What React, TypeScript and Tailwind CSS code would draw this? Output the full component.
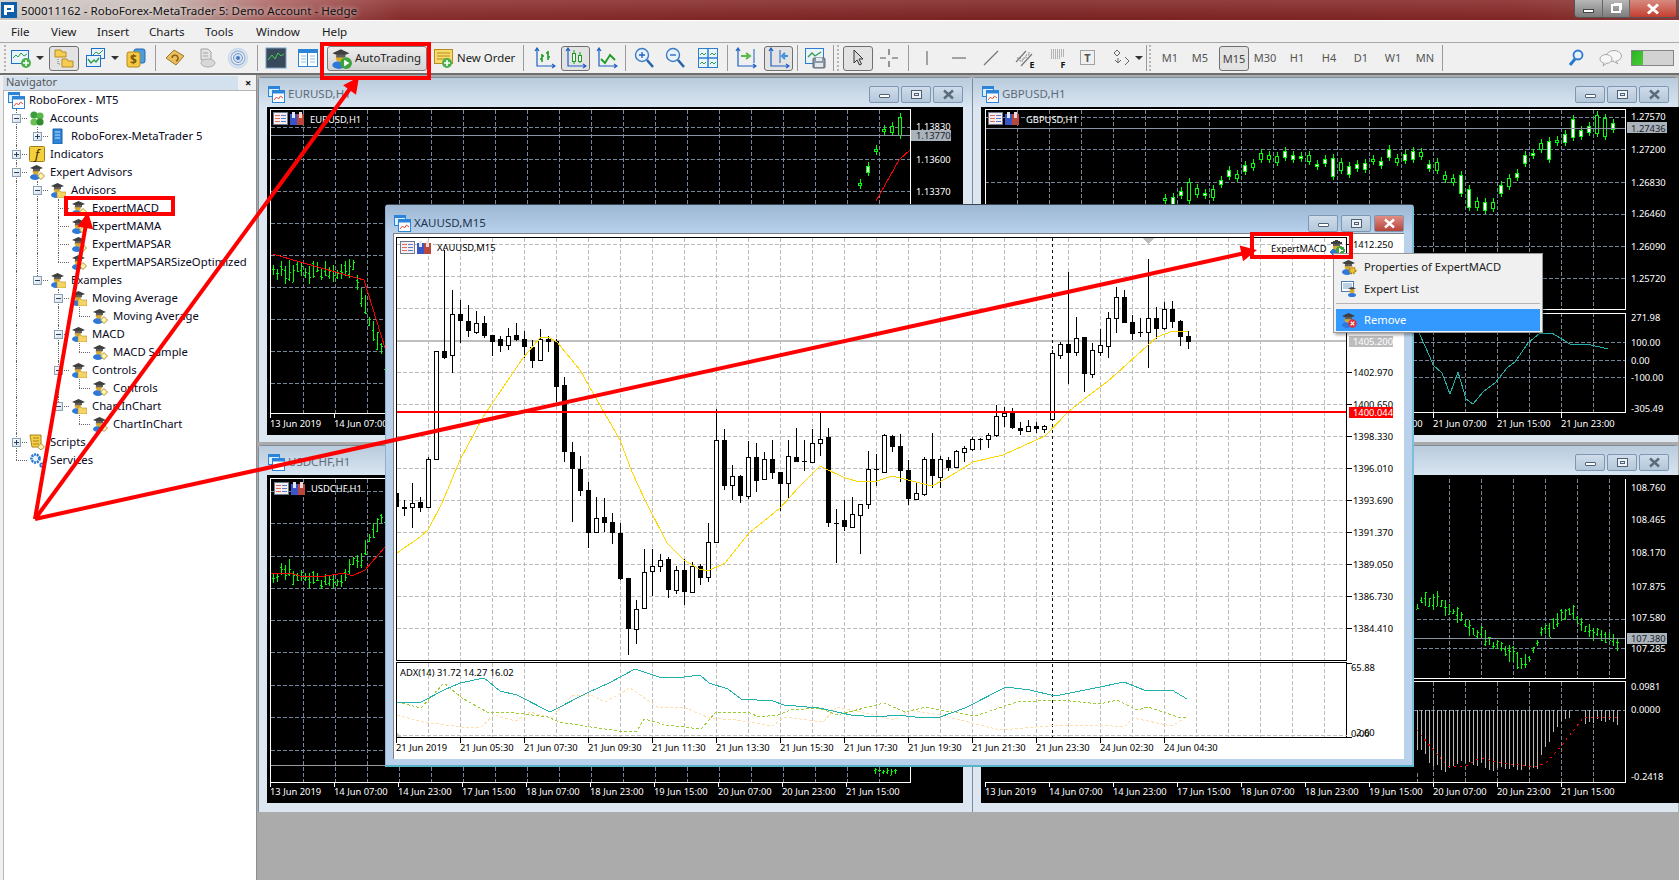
import type { ReactNode } from 'react';

const LABEL = 9.4;

// high, body top, body bottom, low, filled (page pixels, x = 396 + 8 * i)
const candles: [number, number, number, number, number][] = [
  [490, 493, 507, 510, 1], [500, 507, 509, 516, 1], [483, 503, 507, 528, 0], [497, 502, 508, 512, 1], [457, 459, 507, 507, 0],
  [351, 351, 459, 459, 0], [250, 351, 358, 359, 1], [290, 314, 355, 373, 0], [300, 314, 321, 343, 1], [305, 321, 331, 337, 1],
  [311, 323, 332, 334, 0], [316, 323, 336, 338, 1], [335, 335, 342, 356, 1], [336, 339, 346, 352, 1], [328, 336, 345, 350, 0],
  [323, 335, 340, 341, 1], [331, 339, 347, 358, 1], [340, 347, 361, 368, 1], [329, 339, 360, 360, 0], [336, 339, 342, 352, 1],
  [339, 341, 387, 402, 1], [377, 385, 452, 462, 1], [442, 452, 469, 522, 1], [456, 469, 491, 496, 1], [482, 490, 533, 548, 1],
  [497, 518, 532, 532, 0], [498, 517, 523, 532, 1], [513, 522, 533, 544, 1], [523, 533, 579, 580, 1], [578, 578, 629, 655, 1],
  [600, 609, 629, 644, 0], [549, 572, 608, 608, 0], [549, 566, 571, 596, 0], [554, 560, 566, 572, 0], [557, 559, 590, 598, 1],
  [566, 570, 590, 594, 0], [559, 570, 592, 605, 1], [562, 566, 592, 593, 0], [564, 566, 578, 585, 1], [523, 542, 577, 582, 0],
  [409, 440, 542, 542, 0], [429, 440, 486, 490, 1], [465, 476, 485, 500, 0], [475, 476, 496, 503, 1], [441, 457, 496, 499, 0],
  [443, 457, 481, 492, 1], [452, 459, 479, 480, 0], [440, 459, 473, 479, 1], [472, 472, 484, 511, 1], [440, 456, 483, 498, 0],
  [428, 457, 462, 462, 1], [440, 461, 461, 471, 2], [429, 443, 462, 462, 0], [413, 439, 443, 456, 0], [428, 437, 523, 527, 1],
  [509, 523, 523, 563, 2], [500, 520, 527, 531, 1], [497, 514, 527, 527, 0], [504, 504, 515, 554, 0], [451, 469, 504, 509, 0],
  [454, 469, 469, 486, 2], [434, 435, 472, 472, 0], [435, 436, 447, 452, 1], [434, 446, 471, 482, 1], [460, 470, 499, 505, 1],
  [482, 493, 499, 499, 0], [457, 459, 494, 496, 0], [433, 459, 476, 488, 1], [456, 459, 477, 488, 0], [457, 460, 468, 471, 1],
  [450, 451, 467, 467, 0], [446, 448, 452, 462, 0], [437, 439, 449, 451, 0], [438, 439, 439, 450, 2], [433, 435, 439, 448, 0],
  [405, 416, 435, 437, 0], [407, 413, 416, 427, 0], [408, 413, 428, 429, 1], [422, 428, 431, 435, 1], [420, 426, 431, 431, 0],
  [422, 426, 429, 433, 1], [425, 426, 429, 433, 0], [350, 353, 419, 421, 0], [342, 344, 355, 359, 0], [272, 344, 353, 384, 1],
  [317, 338, 352, 356, 0], [337, 337, 374, 392, 1], [343, 350, 374, 378, 0], [329, 345, 352, 356, 0], [312, 318, 346, 358, 0],
  [287, 297, 318, 333, 0], [290, 297, 323, 323, 1], [315, 322, 334, 340, 1], [318, 332, 332, 337, 2], [259, 318, 332, 368, 0],
  [307, 318, 329, 339, 1], [302, 309, 328, 330, 0], [301, 309, 322, 328, 1], [320, 321, 337, 346, 1], [331, 336, 342, 349, 1],
];

const maLine = '397,553 420,537 428,530 442,503 460,460 483,417 523,358 540,338 548,337 557,342 580,370 593,393 620,440 632,472 645,500 667,543 684,560 699,569 708,571 725,563 749,533 769,517 780,508 799,487 820,466 845,478 860,482 877,481 892,476 908,480 932,486 947,478 973,462 1003,455 1045,436 1068,412 1083,400 1107,382 1137,355 1157,337 1173,331 1188,331';
const adxMain = '397,702 421,702 444,690 460,683 484,678 500,691 517,695 550,712 589,692 609,683 635,669 659,677 684,677 700,675 709,683 728,689 741,699 773,701 784,705 819,708 851,715 876,717 898,715 923,718 940,717 965,708 1006,687 1030,690 1055,696 1075,692 1100,687 1124,682 1144,690 1172,690 1187,699';
const adxPlus = '397,702 421,708 444,683 462,698 487,712 516,713 548,717 559,722 591,727 626,732 637,731 644,719 666,725 701,729 716,712 748,712 759,717 778,715 791,710 819,708 837,715 884,703 905,712 926,707 940,710 975,716 1017,702 1060,700 1100,704 1117,700 1137,710 1148,707 1178,717 1187,717';
const adxMinus = '397,715 423,722 462,727 480,728 494,715 516,721 530,712 551,718 573,695 591,695 605,702 630,688 659,708 684,707 709,718 737,720 773,726 784,717 823,722 837,707 862,712 894,720 909,710 940,715 1000,730 1060,725 1100,725 1124,727 1133,718 1172,726 1187,717';

const xauDates = ['21 Jun 2019', '21 Jun 05:30', '21 Jun 07:30', '21 Jun 09:30', '21 Jun 11:30', '21 Jun 13:30', '21 Jun 15:30', '21 Jun 17:30', '21 Jun 19:30', '21 Jun 21:30', '21 Jun 23:30', '24 Jun 02:30', '24 Jun 04:30'];
const xauPrices: [string, number][] = [['1412.250', 244], ['1402.970', 372], ['1400.650', 404], ['1398.330', 436], ['1396.010', 468], ['1393.690', 500], ['1391.370', 532], ['1389.050', 564], ['1386.730', 596], ['1384.410', 628]];
const darkDates = ['13 Jun 2019', '14 Jun 07:00', '14 Jun 23:00', '17 Jun 15:00', '18 Jun 07:00', '18 Jun 23:00', '19 Jun 15:00', '20 Jun 07:00', '20 Jun 23:00', '21 Jun 15:00'];
const gbpDates = ['13 Jun 2019', '14 Jun 07:00', '14 Jun 23:00', '17 Jun 15:00', '18 Jun 07:00', '18 Jun 23:00', '19 Jun 15:00', '21 Jun 07:00', '21 Jun 15:00', '21 Jun 23:00'];

const noise = (i: number) => {
  const v = Math.sin(i * 12.9898) * 43758.5453;
  return (v - Math.floor(v)) * 2 - 1;
};

const along = (path: number[][], x: number) => {
  for (let i = 1; i < path.length; i++) {
    if (x <= path[i][0]) {
      const [x0, y0] = path[i - 1];
      const [x1, y1] = path[i];
      return y0 + ((y1 - y0) * (x - x0)) / (x1 - x0);
    }
  }
  return path[path.length - 1][1];
};

const GreenBars = ({ path, from, to, amp }: { path: number[][]; from: number; to: number; amp: number }) => {
  let d = '';
  for (let x = from; x <= to; x += 4) {
    const c = along(path, x) + noise(x) * amp * 0.5;
    const a = amp * (0.4 + Math.abs(noise(x + 7)) * 0.8);
    d += `M${x} ${Math.round(c - a)}V${Math.round(c + a)}M${x - 1} ${Math.round(c + noise(x + 3) * a)}h1M${x + 1} ${Math.round(c + noise(x + 5) * a)}h1`;
  }
  return <path d={d} stroke="#00ff00" strokeWidth={1} fill="none" />;
};

const GreenCandles = ({ path, from, to }: { path: number[][]; from: number; to: number }) => {
  const out: ReactNode[] = [];
  for (let x = from; x <= to; x += 8) {
    const c = Math.round(along(path, x) + noise(x) * 5);
    const big = noise(x + 9) > 0.75;
    const h = big ? 9 : 1 + Math.round(Math.abs(noise(x + 2)) * 3);
    const up = noise(x + 4) > 0;
    out.push(<rect key={`w${x}`} x={x} y={c - h - 4} width={1} height={2 * h + 8} fill="#00ff00" />);
    out.push(<rect key={`b${x}`} x={x - 1.5} y={c - h + 0.5} width={3} height={2 * h} fill={up ? '#ffffff' : '#000000'} stroke="#00ff00" />);
  }
  return <>{out}</>;
};

const DarkGrid = ({ x0, x1, y0, y1, rows }: { x0: number; x1: number; y0: number; y1: number; rows: number[] }) => {
  let d = '';
  for (let x = x0 + 32; x < x1; x += 32) d += `M${x + 0.5} ${y0}V${y1}`;
  rows.forEach((y) => {
    d += `M${x0} ${y + 0.5}H${x1}`;
  });
  return <path d={d} stroke="#76879b" strokeDasharray="4 2" fill="none" />;
};

const Ticks = ({ x0, y, n, stroke }: { x0: number; y: number; n: number; stroke: string }) => {
  let d = '';
  for (let i = 0; i < n; i++) d += `M${x0 + i * 64 + 0.5} ${y}v5`;
  return <path d={d} stroke={stroke} fill="none" />;
};

// small table + flags in the top left of every chart
const LegendIcons = ({ x, y }: { x: number; y: number }) => (
  <svg x={x} y={y} width={32} height={14} viewBox="0 0 32 14">
    <rect x="0.5" y="0.5" width="14" height="12" fill="#f4eef0" stroke="#6f7a8c" />
    <path d="M2 3h5M2 6h5M2 9h5" stroke="#e06a5e" />
    <path d="M8 3h5M8 6h5M8 9h5" stroke="#5b79c8" />
    <rect x="17" y="2" width="7" height="11" fill="#3a55c8" />
    <rect x="24" y="2" width="7" height="11" fill="#b9473d" />
    <rect x="19" y="0" width="3" height="6" fill="#dfe6f5" />
    <rect x="26" y="0" width="3" height="6" fill="#eddad6" />
  </svg>
);

type CapProps = { deco?: 'diamond' | 'folder' | 'play' | 'gear' | 'x'; size?: number; x?: number; y?: number };

const Cap = ({ deco = 'diamond', size = 16, x, y }: CapProps) => (
  <svg x={x} y={y} width={size} height={size} viewBox="0 0 16 16" className="shrink-0">
    <ellipse cx="6" cy="13" rx="5" ry="3" fill="#2d78d8" />
    <circle cx="6.8" cy="7.5" r="3.1" fill="#d9a92e" />
    <path d="M1 4 7.5 1 14 4 7.5 6.5Z" fill="#3f3f3f" />
    <path d="M4 5h7v2.2H4Z" fill="#5d5d5d" />
    {deco === 'diamond' && <path d="M12 8.5 15.5 12 12 15.5 8.5 12Z" fill="#fff3b0" stroke="#b09030" />}
    {deco === 'folder' && <path d="M7 9h3l1 1h5v6H7Z" fill="#f6d365" stroke="#b08d2e" strokeWidth="0.6" />}
    {deco === 'play' && (
      <>
        <circle cx="11.5" cy="11.5" r="4.5" fill="#3ea33e" />
        <path d="M10 9v5l4-2.5Z" fill="#fff" />
      </>
    )}
    {deco === 'gear' && <circle cx="11.5" cy="11.5" r="3" fill="#f0c330" stroke="#b58a18" strokeWidth="2" strokeDasharray="1.5 1" />}
    {deco === 'x' && (
      <>
        <circle cx="11.5" cy="11.5" r="4.2" fill="#d8323c" />
        <path d="M9.7 9.7l3.6 3.6M13.3 9.7l-3.6 3.6" stroke="#fff" strokeWidth="1.2" />
      </>
    )}
  </svg>
);

const ChartIcon = () => (
  <svg width={17} height={17} viewBox="0 0 17 17" className="shrink-0">
    <rect x="0.5" y="0.5" width="11" height="10" fill="#dcefff" stroke="#2c84d8" />
    <rect x="1" y="1" width="10" height="2" fill="#2c84d8" />
    <rect x="4.5" y="4.5" width="12" height="12" fill="#fff" stroke="#2c84d8" />
    <rect x="5" y="5" width="11" height="2.5" fill="#2c84d8" />
    <path d="M6 14l2.5-3 2 2 2-3 2.5 2" stroke="#e24a3a" fill="none" />
  </svg>
);

const Tool = ({ children }: { children: ReactNode }) => (
  <svg width={22} height={22} viewBox="0 0 22 22" className="shrink-0">
    {children}
  </svg>
);

const Drop = () => (
  <div className="flex h-full w-[11px] items-center justify-center">
    <div className="h-0 w-0 border-x-[4px] border-t-[4px] border-x-transparent border-t-[#333]" />
  </div>
);

const Sep = ({ className }: { className: string }) => <div className={`h-[26px] w-px bg-[#9a9a9a] ${className}`} />;
const Grip = ({ className }: { className: string }) => <div className={`h-[26px] w-[2px] border-l-2 border-dotted border-[#b5b5b5] ${className}`} />;

const Slot = ({ className, children }: { className: string; children: ReactNode }) => (
  <div className={`flex h-[25px] w-[26px] shrink-0 items-center justify-center ${className}`}>{children}</div>
);

const Pressed = ({ className, children }: { className: string; children: ReactNode }) => (
  <div className={`flex h-[25px] w-[29px] shrink-0 items-center justify-center rounded-[3px] border border-[#707070] bg-[#e3e3e3] ${className}`}>{children}</div>
);

const Period = ({ className, label }: { className: string; label: string }) => (
  <div className={`flex h-[25px] w-[30px] shrink-0 items-center justify-center text-[11px] text-[#555] ${className}`}>{label}</div>
);

const axisBlue = <path d="M3 2v17h17M1 4l2-3 2 3M18 17l3 2-3 2" stroke="#1f5fc4" fill="none" strokeWidth="1.2" />;

const Toolbar = () => (
  <div className="flex h-[31px] items-center border-t border-[#a8a8a8] bg-[#f0f0f0] pl-[4px] pr-[5px]">
    <Grip className="mr-[2px]" />
    <Slot className="">
      <Tool>
        <rect x="1.5" y="3.5" width="17" height="13" fill="#e9f3fc" stroke="#1f6fc8" />
        <path d="M3 11l3-3 2 2 3-4 3 3 3-2" stroke="#2f9c46" fill="none" />
        <circle cx="16" cy="16" r="5" fill="#4ab04a" />
        <path d="M16 13v6M13 16h6" stroke="#fff" strokeWidth="1.6" />
      </Tool>
    </Slot>
    <Drop />
    <Pressed className="ml-[4px] w-[30px]">
      <Tool>
        <path d="M2 3h6l1 2h4v5H2Z" fill="#f5cd53" stroke="#b88b22" />
        <path d="M9 12h5l1 2h5v6H9Z" fill="#f5cd53" stroke="#b88b22" />
        <path d="M5 12v5h3" stroke="#777" strokeDasharray="1 1" fill="none" />
      </Tool>
    </Pressed>
    <Slot className="ml-[4px]">
      <Tool>
        <rect x="6.5" y="1.5" width="13" height="10" fill="#e9f3fc" stroke="#1f6fc8" />
        <path d="M8 8l3-3 3 2 4-4" stroke="#2f9c46" fill="none" />
        <rect x="1.5" y="8.5" width="14" height="11" fill="#e9f3fc" stroke="#1f6fc8" />
        <path d="M3 12l3 4 3-3 2 2 3-4" stroke="#2f9c46" fill="none" strokeWidth="1.4" />
      </Tool>
    </Slot>
    <Drop />
    <Slot className="ml-[3px]">
      <Tool>
        <rect x="9" y="2" width="11" height="14" rx="2" fill="#4a9be0" stroke="#2468b0" />
        <rect x="2" y="5" width="13" height="15" rx="2" fill="#f6c944" stroke="#b68a1c" />
        <text x="8.5" y="17" textAnchor="middle" fontSize="12" fontWeight="700" fill="#7a5a08">$</text>
      </Tool>
    </Slot>
    <Sep className="ml-[6px]" />
    <Slot className="ml-[6px]">
      <Tool>
        <path d="M2 11 10 3l10 6-8 9Z" fill="#e9be5e" stroke="#9d7a28" />
        <path d="M8 11a3 3 0 1 1 4 3" stroke="#8a5a12" fill="none" strokeWidth="1.4" />
      </Tool>
    </Slot>
    <Slot className="ml-[5px]">
      <Tool>
        <path d="M6 2h7l3 3v8H6Z" fill="#e2e2e2" stroke="#a2a2a2" />
        <path d="M8 6h5M8 9h5" stroke="#a8a8a8" />
        <ellipse cx="13" cy="16" rx="7" ry="4" fill="#d8d8d8" stroke="#b0b0b0" />
      </Tool>
    </Slot>
    <Slot className="ml-[6px]">
      <Tool>
        <circle cx="11" cy="11" r="9.5" fill="none" stroke="#c8d8ec" strokeWidth="1.5" />
        <circle cx="11" cy="11" r="7" fill="none" stroke="#9ab7dc" strokeWidth="1.5" />
        <circle cx="11" cy="11" r="4.5" fill="#d0e0f4" stroke="#6e92c6" />
        <circle cx="11" cy="11" r="2" fill="#4a78bc" />
      </Tool>
    </Slot>
    <Sep className="ml-[6px]" />
    <Slot className="ml-[5px]">
      <Tool>
        <rect x="1" y="1" width="20" height="20" fill="#37495a" stroke="#7aa0c0" />
        <path d="M3 13l4-5 3 4 3-6 3 3 3-2" stroke="#3fd048" fill="none" />
      </Tool>
    </Slot>
    <Slot className="ml-[6px]">
      <Tool>
        <rect x="1.5" y="2.5" width="19" height="17" fill="#fff" stroke="#2c84d8" />
        <rect x="2" y="3" width="18" height="3" fill="#2c84d8" />
        <path d="M10.5 6v13" stroke="#2c84d8" />
        <path d="M4 9h5M4 12h5M4 15h5M13 9h5M13 12h5M13 15h5" stroke="#94bce2" />
      </Tool>
    </Slot>
    <div className="ml-[6px] flex h-[25px] w-[100px] shrink-0 items-center gap-[3px] whitespace-nowrap rounded-[3px] border border-[#7a7a7a] bg-gradient-to-b from-[#ededed] to-[#d3d3d3] pl-[3px] text-[11.4px] text-[#222]">
      <Cap deco="play" size={21} />
      <span>AutoTrading</span>
    </div>
    <div className="ml-[6px] flex h-[25px] w-[79px] shrink-0 items-center gap-[2px] whitespace-nowrap text-[11.4px] text-[#222]">
      <Tool>
        <rect x="1.5" y="2.5" width="18" height="14" fill="#f7db6b" stroke="#b88b22" />
        <path d="M4 6h13M4 9h13M4 12h9" stroke="#b88b22" />
        <circle cx="14" cy="16" r="5" fill="#4ab04a" />
        <path d="M14 13v6M11 16h6" stroke="#fff" strokeWidth="1.6" />
      </Tool>
      <span>New Order</span>
    </div>
    <Sep className="ml-[11px]" />
    <Slot className="ml-[8px]">
      <Tool>
        {axisBlue}
        <path d="M8 7v8M6 12h2M8 9h2M14 4v9M12 6h2M14 10h2" stroke="#1b9c20" strokeWidth="1.6" fill="none" />
      </Tool>
    </Slot>
    <Pressed className="ml-[3px]">
      <Tool>
        {axisBlue}
        <rect x="7.5" y="6.5" width="3" height="8" fill="#fff" stroke="#1b9c20" />
        <rect x="13.5" y="8.5" width="3" height="6" fill="#fff" stroke="#1b9c20" />
        <path d="M9 3v3M9 15v2M15 5v3M15 15v1" stroke="#1b9c20" />
      </Tool>
    </Pressed>
    <Slot className="ml-[4px]">
      <Tool>
        {axisBlue}
        <path d="M5 12l4 4 5-8 5 5" stroke="#1b9c20" strokeWidth="1.8" fill="none" />
      </Tool>
    </Slot>
    <Sep className="ml-[5px]" />
    <Slot className="ml-[5px]">
      <Tool>
        <circle cx="9" cy="8" r="6.5" fill="#e7f2fc" stroke="#3b7cc4" strokeWidth="1.4" />
        <path d="M9 5v6M6 8h6" stroke="#1f5fc4" strokeWidth="1.3" />
        <path d="M14 13l6 7" stroke="#2a62a8" strokeWidth="2.6" />
      </Tool>
    </Slot>
    <Slot className="ml-[5px]">
      <Tool>
        <circle cx="9" cy="8" r="6.5" fill="#e7f2fc" stroke="#3b7cc4" strokeWidth="1.4" />
        <path d="M6 8h6" stroke="#1f5fc4" strokeWidth="1.3" />
        <path d="M14 13l6 7" stroke="#2a62a8" strokeWidth="2.6" />
      </Tool>
    </Slot>
    <Slot className="ml-[7px]">
      <Tool>
        <rect x="1.5" y="1.5" width="19" height="19" fill="#eaf4fd" stroke="#2c7cd0" />
        <path d="M11 1.5v19M1.5 11h19" stroke="#2c7cd0" strokeWidth="1.5" />
        <path d="M3 8l2-2 2 2 2-2M13 8l2-2 2 2 2-2M3 17l2-2 2 2 2-2M13 17l2-2 2 2 2-2" stroke="#2f9c46" fill="none" />
      </Tool>
    </Slot>
    <Sep className="ml-[6px]" />
    <Slot className="ml-[5px]">
      <Tool>
        {axisBlue}
        <path d="M19 2v14" stroke="#1f5fc4" />
        <path d="M6 9h7M11 6l4 3-4 3" stroke="#58b84c" strokeWidth="2" fill="none" />
      </Tool>
    </Slot>
    <Pressed className="ml-[5px]">
      <Tool>
        {axisBlue}
        <path d="M12 3v13" stroke="#1f5fc4" />
        <path d="M20 9h-4M17 6l-3 3 3 3" stroke="#3b8fdc" strokeWidth="2" fill="none" />
      </Tool>
    </Pressed>
    <Sep className="ml-[4px]" />
    <Slot className="ml-[4px]">
      <Tool>
        <rect x="1.5" y="1.5" width="18" height="15" fill="#e9f3fc" stroke="#2c7cd0" />
        <path d="M4 10l4-4 3 3 6-4" stroke="#2f9c46" strokeWidth="1.3" fill="none" />
        <rect x="9" y="11" width="12" height="10" rx="1" fill="#8d9aa6" stroke="#5d6872" />
        <rect x="12" y="11" width="6" height="3" fill="#e4e8ec" />
        <rect x="11" y="16" width="8" height="4" fill="#e4e8ec" />
      </Tool>
    </Slot>
    <Sep className="ml-[5px]" />
    <Grip className="ml-[3px]" />
    <Pressed className="ml-[4px] w-[30px]">
      <Tool>
        <path d="M7 3v13l3-3 2.5 5 2-1-2.5-5h4Z" fill="#dadada" stroke="#333" />
      </Tool>
    </Pressed>
    <Slot className="ml-[3px]">
      <Tool>
        <path d="M11 2v6M11 14v6M2 11h6M14 11h6" stroke="#555" strokeWidth="1.2" />
      </Tool>
    </Slot>
    <Sep className="ml-[6px]" />
    <Slot className="ml-[5px]">
      <Tool>
        <path d="M11 4v14" stroke="#777" strokeWidth="1.3" />
      </Tool>
    </Slot>
    <Slot className="ml-[6px]">
      <Tool>
        <path d="M4 11h14" stroke="#777" strokeWidth="1.3" />
      </Tool>
    </Slot>
    <Slot className="ml-[6px]">
      <Tool>
        <path d="M4 18 18 4" stroke="#777" strokeWidth="1.3" />
      </Tool>
    </Slot>
    <Slot className="ml-[8px]">
      <Tool>
        <path d="M2 15l10-11M7 19 18 7" stroke="#777" strokeWidth="1.2" />
        <path d="M3 11h3v3h3v-3h3V8h3V5" stroke="#777" strokeDasharray="1.5 1" fill="none" />
        <text x="18" y="21" textAnchor="middle" fontSize="9" fontWeight="700" fill="#111">E</text>
      </Tool>
    </Slot>
    <Slot className="ml-[8px]">
      <Tool>
        <path d="M3 3h14M3 5h14M3 7h14M3 9h14M3 11h9" stroke="#777" strokeDasharray="1 1" />
        <text x="15" y="21" textAnchor="middle" fontSize="9" fontWeight="700" fill="#111">F</text>
      </Tool>
    </Slot>
    <Slot className="ml-[3px]">
      <Tool>
        <rect x="3.5" y="3.5" width="14" height="14" fill="none" stroke="#555" strokeDasharray="1 1" />
        <text x="10.5" y="15" textAnchor="middle" fontSize="11" fontWeight="700" fill="#555">T</text>
      </Tool>
    </Slot>
    <Slot className="ml-[6px]">
      <Tool>
        <path d="M8 3l3 3-3 3-3-3ZM6 13l3 3 3-3M9 11v5M16 10l4 4-4 4" stroke="#666" fill="none" />
      </Tool>
    </Slot>
    <Drop />
    <Sep className="ml-[2px]" />
    <Grip className="ml-[2px]" />
    <Period className="ml-[4px]" label="M1" />
    <Period className="" label="M5" />
    <div className="ml-[4px] flex h-[25px] w-[30px] shrink-0 items-center justify-center rounded-[3px] border border-[#707070] bg-[#e3e3e3] pt-[2px] text-[11px] text-[#444]">M15</div>
    <Period className="ml-[1px]" label="M30" />
    <Period className="ml-[2px]" label="H1" />
    <Period className="ml-[2px]" label="H4" />
    <Period className="ml-[2px]" label="D1" />
    <Period className="ml-[2px]" label="W1" />
    <Period className="ml-[2px]" label="MN" />
    <Sep className="ml-[2px]" />
    <div className="ml-auto flex items-center">
      <svg width={16} height={18} viewBox="0 0 16 18" className="mr-[15px]">
        <circle cx="10" cy="6" r="4.5" fill="#e7f2fc" stroke="#2a78d0" strokeWidth="1.8" />
        <path d="M7 10 2 16" stroke="#2a78d0" strokeWidth="3" />
      </svg>
      <svg width={23} height={17} viewBox="0 0 23 17" className="mr-[9px]">
        <ellipse cx="15" cy="6" rx="7.5" ry="5.5" fill="#f6f6f6" stroke="#a8a8a8" />
        <path d="M17 11l2 3-5-3" fill="#f6f6f6" stroke="#a8a8a8" />
        <ellipse cx="7" cy="9" rx="6" ry="4.5" fill="#f6f6f6" stroke="#a8a8a8" />
        <path d="M5 13l-1 3 4-3" fill="#f6f6f6" stroke="#a8a8a8" />
      </svg>
      <div className="flex h-[16px] w-[43px] border border-[#858585] bg-[#d2d2d2]">
        <div className="h-full w-[11px] bg-gradient-to-br from-[#27b327] to-[#4ccb36]" />
      </div>
    </div>
  </div>
);

type TreeRow = { label: string; guides: string; box?: '+' | '-'; icon: ReactNode };

const robot = <Cap deco="diamond" />;
const advisorFolder = <Cap deco="folder" />;

const treeRows: TreeRow[] = [
  { label: 'RoboForex - MT5', guides: '', icon: <ChartIcon /> },
  {
    label: 'Accounts', guides: 'T', box: '-',
    icon: (
      <svg width={16} height={16} viewBox="0 0 16 16" className="shrink-0">
        <circle cx="5" cy="5" r="3.6" fill="#3b9d3b" />
        <circle cx="11" cy="6" r="3.6" fill="#58b64a" />
        <circle cx="5" cy="12" r="3.6" fill="#6cc055" />
        <circle cx="11" cy="12" r="3.6" fill="#2f8c2f" />
      </svg>
    ),
  },
  {
    label: 'RoboForex-MetaTrader 5', guides: '|L', box: '+',
    icon: (
      <svg width={16} height={16} viewBox="0 0 16 16" className="shrink-0">
        <path d="M3 1h9v15H3Z" fill="#2f86d8" stroke="#1c5fa8" />
        <path d="M5 4h5M5 7h5M5 10h5" stroke="#bfe0fa" />
      </svg>
    ),
  },
  {
    label: 'Indicators', guides: 'T', box: '+',
    icon: (
      <svg width={16} height={16} viewBox="0 0 16 16" className="shrink-0">
        <rect x="0.5" y="0.5" width="15" height="15" rx="1" fill="#f6cf3c" stroke="#a07d18" />
        <text x="8" y="13" textAnchor="middle" fontSize="13" fontStyle="italic" fill="#3a2b00">f</text>
      </svg>
    ),
  },
  { label: 'Expert Advisors', guides: 'T', box: '-', icon: robot },
  { label: 'Advisors', guides: '|T', box: '-', icon: advisorFolder },
  { label: 'ExpertMACD', guides: '||T', icon: robot },
  { label: 'ExpertMAMA', guides: '||T', icon: robot },
  { label: 'ExpertMAPSAR', guides: '||T', icon: robot },
  { label: 'ExpertMAPSARSizeOptimized', guides: '||L', icon: robot },
  { label: 'Examples', guides: '|L', box: '-', icon: advisorFolder },
  { label: 'Moving Average', guides: '| T', box: '-', icon: advisorFolder },
  { label: 'Moving Average', guides: '| |L', icon: robot },
  { label: 'MACD', guides: '| T', box: '-', icon: advisorFolder },
  { label: 'MACD Sample', guides: '| |L', icon: robot },
  { label: 'Controls', guides: '| T', box: '-', icon: advisorFolder },
  { label: 'Controls', guides: '| |L', icon: robot },
  { label: 'ChartInChart', guides: '| L', box: '-', icon: advisorFolder },
  { label: 'ChartInChart', guides: '|  L', icon: robot },
  {
    label: 'Scripts', guides: 'T', box: '+',
    icon: (
      <svg width={16} height={16} viewBox="0 0 16 16" className="shrink-0">
        <path d="M1 1h11v12H3Z" fill="#f7d04a" stroke="#a88318" />
        <path d="M4 4h6M4 7h6M4 10h6" stroke="#a88318" />
        <path d="M12 9.5 15.5 13 12 16 8.5 13Z" fill="#fff3b0" stroke="#b09030" />
      </svg>
    ),
  },
  {
    label: 'Services', guides: 'L',
    icon: (
      <svg width={16} height={16} viewBox="0 0 16 16" className="shrink-0">
        <circle cx="6.5" cy="6.5" r="4" fill="#e7f2fc" stroke="#2a78d0" strokeWidth="2.6" strokeDasharray="2 0.8" />
        <circle cx="13" cy="13" r="1.8" fill="#bcd8f4" stroke="#2a78d0" strokeWidth="1.6" />
      </svg>
    ),
  },
];

const GuideCell = ({ kind, box }: { kind: string; box?: '+' | '-' }) => (
  <div className="relative h-[18px] w-[21px] shrink-0">
    {(kind === '|' || kind === 'T') && <div className="absolute bottom-0 left-[10px] top-0 border-l border-dotted border-[#666]" />}
    {kind === 'L' && <div className="absolute left-[10px] top-0 h-[9px] border-l border-dotted border-[#666]" />}
    {(kind === 'T' || kind === 'L') && <div className="absolute left-[10px] top-[9px] w-[11px] border-t border-dotted border-[#666]" />}
    {box && (
      <div className="absolute left-[6px] top-[5px] h-[9px] w-[9px] border border-[#8aa0b6] bg-gradient-to-br from-white to-[#d5dde6]">
        <div className="absolute left-[1px] top-[3px] h-px w-[5px] bg-[#24405e]" />
        {box === '+' && <div className="absolute left-[3px] top-[1px] h-[5px] w-px bg-[#24405e]" />}
      </div>
    )}
  </div>
);

const Navigator = () => (
  <div className="flex w-[257px] shrink-0 flex-col border-r border-[#8e8e8e] bg-[#f0f0f0] pl-[3px]">
    <div className="flex h-[15px] shrink-0 items-center">
      <div className="flex h-[14px] w-[235px] items-center bg-[#d3e0ed] pl-[3px] text-[11px] text-[#555]">Navigator</div>
      <div className="ml-[7px] text-[11px] font-bold leading-none text-[#111]">×</div>
    </div>
    <div className="flex-1 border-l border-t border-[#b5b5b5] bg-white pl-[2px] text-[11.3px] text-[#0a0a1e]">
      {treeRows.map((row, i) => {
        const cells = row.guides.split('');
        return (
          <div key={i} className="flex h-[18px] items-center whitespace-nowrap">
            {cells.map((kind, k) => (
              <GuideCell key={k} kind={kind} box={k === cells.length - 1 ? row.box : undefined} />
            ))}
            <div className="ml-[2px] flex w-[16px] justify-center">{row.icon}</div>
            <span className="ml-[5px]">{row.label}</span>
          </div>
        );
      })}
    </div>
  </div>
);

const WinBtn = ({ kind, hot }: { kind: 'min' | 'max' | 'close'; hot?: boolean }) => (
  <div
    className={`flex h-[17px] w-[30px] items-center justify-center rounded-[2px] border border-[#7d97b3] ${
      hot ? 'bg-gradient-to-b from-[#e08d84] to-[#b6443a]' : 'bg-gradient-to-b from-[#cfdcea] to-[#b4c7da]'
    }`}
  >
    {kind === 'min' && <div className="mt-[4px] h-[4px] w-[11px] rounded-[1px] border border-[#4e6174] bg-white" />}
    {kind === 'max' && (
      <div className="flex h-[9px] w-[11px] items-center justify-center border border-[#4e6174] bg-[#eef2f6]">
        <div className="h-[3px] w-[5px] border border-[#4e6174]" />
      </div>
    )}
    {kind === 'close' && (
      <svg width={13} height={11} viewBox="0 0 13 11">
        <path d="M2 1.5 11 9.5M11 1.5 2 9.5" stroke={hot ? '#fff' : '#5a6b7c'} strokeWidth="2.4" />
      </svg>
    )}
  </div>
);

const ChartWindow = ({ title, className, children }: { title?: string; className: string; children: ReactNode }) => (
  <div className={`absolute flex flex-col rounded-t-[4px] border-l border-t border-[#7e8c99] bg-[#dbe6f1] ${className}`}>
    <div className="flex h-[29px] shrink-0 items-center bg-gradient-to-b from-[#b9cbdc] to-[#d9e5f2] pl-[9px] pr-[9px] pt-[3px] text-[11.5px] text-[#5e6b78]">
      {title && (
        <>
          <ChartIcon />
          <span className="ml-[3px]">{title}</span>
        </>
      )}
      <div className="ml-auto flex gap-[2px]">
        <WinBtn kind="min" />
        <WinBtn kind="max" />
        <WinBtn kind="close" />
      </div>
    </div>
    <div className="pl-[8px]">{children}</div>
  </div>
);

const EurChart = () => {
  const rows = [127, 159, 191, 223, 255, 287, 319, 351, 383];
  return (
    <svg viewBox="267 107 696 328" width={696} height={328} className="block bg-black" shapeRendering="crispEdges">
      <DarkGrid x0={271} x1={910} y0={110} y1={413} rows={rows} />
      <GreenBars path={[[273, 272], [340, 270], [353, 266], [364, 305], [385, 364]]} from={273} to={385} amp={9} />
      <GreenCandles path={[[850, 203], [867, 171], [883, 134], [905, 126]]} from={860} to={906} />
      <polyline points="273,254 300,262 364,280 385,348" stroke="#ff0000" fill="none" />
      <polyline points="876,201 899,160 910,150" stroke="#ff0000" fill="none" />
      <path d="M271 135.5H910" stroke="#8a96a6" />
      <rect x="270.5" y="109.5" width="640" height="304" fill="none" stroke="#fff" />
      <LegendIcons x={273} y={112} />
      <text x={310} y={123} fill="#fff" fontSize={LABEL}>EURUSD,H1</text>
      <rect x="911" y="130" width="40" height="11" fill="#aab2bc" />
      <text x={916} y={130} fill="#fff" fontSize={LABEL}>1.13830</text>
      <text x={916} y={139} fill="#20242a" fontSize={LABEL}>1.13770</text>
      <text x={916} y={163} fill="#fff" fontSize={LABEL}>1.13600</text>
      <text x={916} y={195} fill="#fff" fontSize={LABEL}>1.13370</text>
      <Ticks x0={270} y={413} n={10} stroke="#fff" />
      {darkDates.slice(0, 2).map((d, i) => (
        <text key={d} x={270 + i * 64} y={427} fill="#fff" fontSize={LABEL}>{d}</text>
      ))}
    </svg>
  );
};

const gbpPath = [[1160, 200], [1210, 191], [1253, 160], [1296, 158], [1349, 166], [1413, 152], [1467, 193], [1488, 206], [1531, 155], [1574, 131], [1621, 126]];

const GbpChart = () => {
  const rows = [149, 182, 214, 246, 278];
  return (
    <svg viewBox="981 107 698 328" width={698} height={328} className="block bg-black" shapeRendering="crispEdges">
      <DarkGrid x0={985} x1={1626} y0={110} y1={310} rows={[117, ...rows]} />
      <GreenCandles path={gbpPath} from={1165} to={1620} />
      <path d="M985 128.5H1626" stroke="#8a96a6" />
      <path d="M1433.5 313V413M1465.5 313V413M1497.5 313V413M1529.5 313V413M1561.5 313V413M1593.5 313V413" stroke="#76879b" strokeDasharray="4 2" />
      <path d="M1413 342.5H1626M1413 360.5H1626M1413 377.5H1626" stroke="#76879b" strokeDasharray="4 2" />
      <polyline points="1413,320 1420,335 1430,357 1433,365 1442,373 1450,394 1458,372 1466,399 1473,404 1483,392 1495,383 1507,368 1515,362 1528,343 1540,333 1552,333 1570,344 1587,344 1608,349" stroke="#20b2aa" fill="none" />
      <rect x="985.5" y="109.5" width="640" height="200" fill="none" stroke="#fff" />
      <rect x="985.5" y="313.5" width="640" height="99" fill="none" stroke="#fff" />
      <LegendIcons x={988} y={112} />
      <text x={1026} y={123} fill="#fff" fontSize={LABEL}>GBPUSD,H1</text>
      <rect x="1627" y="122" width="40" height="11" fill="#aab2bc" />
      {[['1.27570', 120], ['1.26830', 186], ['1.27200', 153], ['1.26460', 217], ['1.26090', 250], ['1.25720', 282], ['271.98', 321], ['100.00', 346], ['0.00', 364], ['-100.00', 381], ['-305.49', 412]].map(([t, y]) => (
        <text key={t as string} x={1631} y={y as number} fill="#fff" fontSize={LABEL}>{t}</text>
      ))}
      <text x={1631} y={132} fill="#20242a" fontSize={LABEL}>1.27436</text>
      <Ticks x0={985} y={413} n={10} stroke="#fff" />
      {gbpDates.map((d, i) => (
        <text key={d} x={985 + i * 64} y={427} fill="#fff" fontSize={LABEL}>{d}</text>
      ))}
    </svg>
  );
};

const ChfChart = () => {
  const rows = [491, 523, 556, 588, 620, 652, 685, 717, 750];
  return (
    <svg viewBox="267 475 696 328" width={696} height={328} className="block bg-black" shapeRendering="crispEdges">
      <DarkGrid x0={271} x1={910} y0={479} y1={782} rows={rows} />
      <GreenBars path={[[273, 580], [280, 572], [290, 568], [295, 582], [303, 575], [323, 582], [330, 578], [343, 580], [350, 563], [363, 557], [370, 533], [385, 518]]} from={273} to={385} amp={7} />
      <GreenBars path={[[875, 772], [898, 772]]} from={875} to={898} amp={3} />
      <polyline points="271,573 290,573 300,576 325,576 345,573 352,576 365,570 385,547" stroke="#ff0000" fill="none" />
      <path d="M271 765.5H910" stroke="#9a9a9a" />
      <rect x="270.5" y="478.5" width="640" height="304" fill="none" stroke="#fff" />
      <LegendIcons x={274} y={482} />
      <text x={311} y={492} fill="#fff" fontSize={LABEL}>USDCHF,H1</text>
      <Ticks x0={270} y={782} n={10} stroke="#fff" />
      {darkDates.map((d, i) => (
        <text key={d} x={270 + i * 64} y={795} fill="#fff" fontSize={LABEL}>{d}</text>
      ))}
    </svg>
  );
};

const macdEnvelope = [[1417, 748], [1430, 763], [1443, 772], [1469, 760], [1488, 768], [1517, 768], [1537, 768], [1545, 747], [1554, 730], [1565, 718], [1572, 716], [1585, 722], [1617, 722]];

const JpyChart = () => {
  let hist = '';
  for (let x = 1417; x <= 1617; x += 4) {
    if (x > 1570 && x < 1582) continue;
    hist += `M${x} 710V${Math.round(along(macdEnvelope, x) + noise(x) * 3)}`;
  }
  return (
    <svg viewBox="981 475 698 328" width={698} height={328} className="block bg-black" shapeRendering="crispEdges">
      <DarkGrid x0={1417} x1={1625} y0={479} y1={678} rows={[619, 648]} />
      <path d="M1433.5 682V782M1465.5 682V782M1497.5 682V782M1529.5 682V782M1561.5 682V782M1593.5 682V782M1417.5 773V782" stroke="#76879b" strokeDasharray="4 2" />
      <path d="M1413 710.5H1625" stroke="#76879b" strokeDasharray="4 2" />
      <GreenBars path={[[1413, 605], [1435, 600], [1478, 632], [1526, 664], [1542, 632], [1569, 610], [1590, 632], [1617, 642]]} from={1417} to={1617} amp={7} />
      <path d="M1413 638.5H1625" stroke="#8a96a6" />
      <path d={hist} stroke="#b9b9b9" />
      <polyline points="1417,730 1442,760 1449,767 1466,766 1480,758 1502,763 1536,767 1547,762 1562,745 1584,717 1617,718" stroke="#ff0000" strokeDasharray="2 4" fill="none" />
      <path d="M985 678.5H1625.5V478.5M985 681.5H1625.5V782.5H985" stroke="#fff" fill="none" />
      <rect x="1627" y="633" width="40" height="11" fill="#aab2bc" />
      {[['108.760', 491], ['108.465', 523], ['108.170', 556], ['107.875', 590], ['107.580', 621], ['107.285', 652], ['0.0981', 690], ['0.0000', 713], ['-0.2418', 780]].map(([t, y]) => (
        <text key={t as string} x={1631} y={y as number} fill="#fff" fontSize={LABEL}>{t}</text>
      ))}
      <text x={1631} y={642} fill="#20242a" fontSize={LABEL}>107.380</text>
      <Ticks x0={985} y={782} n={10} stroke="#fff" />
      {darkDates.map((d, i) => (
        <text key={d} x={985 + i * 64} y={795} fill="#fff" fontSize={LABEL}>{d}</text>
      ))}
    </svg>
  );
};

const XauChart = () => {
  let grid = '';
  let adxGrid = '';
  for (let x = 428; x < 1347; x += 32) {
    grid += `M${x + 0.5} 238V660`;
    adxGrid += `M${x + 0.5} 663V738`;
  }
  for (let y = 244; y <= 628; y += 32) {
    if (y !== 340) grid += `M397 ${y + 0.5}H1347`;
  }
  return (
    <svg viewBox="396 237 1008 522" width={1008} height={522} className="block bg-white" shapeRendering="crispEdges">
      <path d={grid} stroke="#bdbdbd" strokeDasharray="4 2" fill="none" />
      <path d={adxGrid} stroke="#bdbdbd" strokeDasharray="4 2" fill="none" />
      <path d="M397 341H1347" stroke="#c0c0c0" strokeWidth={1.5} />
      <path d="M1052.5 238V738" stroke="#111" strokeDasharray="3 3" />
      <path d="M1142 238h12l-6 6Z" fill="#bdbdbd" />
      {candles.map(([h, t, b, l, f], i) => {
        const x = 396 + i * 8;
        return (
          <g key={i}>
            <rect x={x} y={h} width={1} height={l - h} fill="#000" />
            {f === 2 && <rect x={x - 2} y={t} width={5} height={1} fill="#000" />}
            {f === 1 && <rect x={x - 2} y={t} width={5} height={b - t} fill="#000" />}
            {f === 0 && <rect x={x - 1.5} y={t + 0.5} width={4} height={b - t} fill="#fff" stroke="#000" />}
          </g>
        );
      })}
      <polyline points={maLine} stroke="#ffd700" fill="none" />
      <path d="M396 412H1347" stroke="#ff0000" strokeWidth={2} />
      <rect x="396.5" y="237.5" width="950" height="423" fill="none" stroke="#000" />
      <rect x="396.5" y="662.5" width="950" height="75" fill="none" stroke="#000" />
      <path d="M397 735.5H1347" stroke="#c4c4c4" strokeDasharray="4 2" />
      <path d="M397 733v4h4Z" fill="#c4c4c4" />
      <polyline points={adxMinus} stroke="#ffdead" strokeDasharray="3 2" fill="none" />
      <polyline points={adxPlus} stroke="#9acd32" strokeDasharray="3 2" fill="none" />
      <polyline points={adxMain} stroke="#20b2aa" fill="none" />
      <LegendIcons x={400} y={241} />
      <text x={437} y={251} fill="#000" fontSize={LABEL}>XAUUSD,M15</text>
      <text x={400} y={676} fill="#000" fontSize={LABEL}>ADX(14) 31.72 14.27 16.02</text>
      <text x={1271} y={252} fill="#000" fontSize={LABEL}>ExpertMACD</text>
      <Cap deco="play" size={16} x={1329} y={239} />
      {xauPrices.map(([t, y]) => (
        <g key={t}>
          <rect x={1347} y={y} width={5} height={1} fill="#000" />
          <text x={1353} y={y + 4} fill="#000" fontSize={LABEL}>{t}</text>
        </g>
      ))}
      <rect x="1349" y="336" width="44" height="11" fill="#bdbdbd" />
      <text x={1353} y={345} fill="#fff" fontSize={LABEL}>1405.200</text>
      <rect x="1349" y="407" width="44" height="11" fill="#ff0000" />
      <text x={1353} y={416} fill="#fff" fontSize={LABEL}>1400.044</text>
      <text x={1351} y={671} fill="#000" fontSize={LABEL}>65.88</text>
      <text x={1351} y={737} fill="#000" fontSize={LABEL}>0.00</text>
      <text x={1356} y={736} fill="#000" fontSize={LABEL}>2.60</text>
      <path d="M1347 663.5h5M1347 737.5h5" stroke="#000" />
      {xauDates.map((d, i) => (
        <text key={d} x={396 + i * 64} y={751} fill="#000" fontSize={LABEL}>{d}</text>
      ))}
      <Ticks x0={396} y={738} n={13} stroke="#000" />
    </svg>
  );
};

const ContextMenu = () => (
  <div className="absolute left-[1333px] top-[253px] z-30 flex h-[80px] w-[210px] flex-col border border-[#979797] bg-[#f0f0f0] pt-[2px] text-[11.2px] text-[#222] shadow-[2px_2px_3px_rgba(0,0,0,0.35)]">
    <div className="flex h-[22px] items-center pl-[7px]">
      <Cap deco="gear" />
      <span className="ml-[7px]">Properties of ExpertMACD</span>
    </div>
    <div className="flex h-[22px] items-center pl-[7px]">
      <svg width={16} height={16} viewBox="0 0 16 16">
        <rect x="0.5" y="0.5" width="12" height="10" fill="#fff" stroke="#4c7cb0" />
        <path d="M2 3h9M2 5h9M2 7h9" stroke="#7ca0c8" />
        <circle cx="11" cy="10" r="2.5" fill="#d9a92e" />
        <ellipse cx="11" cy="14" rx="4" ry="2" fill="#2d78d8" />
        <path d="M7 7.5 11 6l4 1.5-4 1Z" fill="#3f3f3f" />
      </svg>
      <span className="ml-[7px]">Expert List</span>
    </div>
    <div className="mx-[2px] mt-[3px] h-px bg-[#b5b5b5]" />
    <div className="mx-[2px] mt-[5px] flex h-[22px] items-center bg-[#3399ff] pl-[5px] text-white">
      <Cap deco="x" />
      <span className="ml-[7px]">Remove</span>
    </div>
  </div>
);

const Arrow = ({ x, y, a }: { x: number; y: number; a: number }) => (
  <path d="M0 0-16-8-16 8Z" transform={`translate(${x} ${y}) rotate(${a})`} fill="#ff0000" />
);

const Annotations = () => (
  <svg viewBox="0 0 1679 880" className="pointer-events-none absolute left-0 top-0 z-40 h-[880px] w-[1679px]">
    <g stroke="#ff0000" strokeWidth={4} fill="none">
      <path d="M35 519 352 86" />
      <path d="M35 519 86 224" />
      <path d="M35 519 1245 253" />
      <rect x="322" y="44" width="107" height="34" />
      <rect x="66" y="198" width="107" height="16" />
      <rect x="1252" y="234" width="99" height="23" />
    </g>
    <Arrow x={359} y={77} a={-53.8} />
    <Arrow x={88} y={212} a={-80.2} />
    <Arrow x={1257} y={250} a={-12.4} />
  </svg>
);

export default function App() {
  return (
    <div className="relative flex h-[880px] w-[1679px] flex-col overflow-hidden bg-[#f0f0f0] [font-family:'Noto_Sans','Liberation_Sans',sans-serif] [&_svg_text]:[font-family:'Noto_Sans','Liberation_Sans',sans-serif]">
      {/* aero title bar */}
      <div className="relative flex h-[21px] shrink-0 items-center border-b border-white bg-[linear-gradient(to_bottom,rgba(255,255,255,0.12),rgba(0,0,0,0.05)),linear-gradient(to_right,#d4cdc9_0%,#c9bcb8_9%,#ad6664_16%,#8c2d2d_24%,#7f2323_60%,#862626_90%,#8d3a38_100%)]">
        <svg width={16} height={16} viewBox="0 0 16 16" className="ml-[1px]">
          <rect width="16" height="16" fill="#0f5fa8" />
          <path d="M3 3h10v7H6v3H3Z" fill="#fff" />
          <rect x="6" y="6" width="4" height="2" fill="#0f5fa8" />
        </svg>
        <span className="ml-[4px] pt-[1px] text-[11.6px] text-[#111] [text-shadow:0_0_5px_#fff]">500011162 - RoboForex-MetaTrader 5: Demo Account - Hedge</span>
        <div className="absolute right-[2px] top-0 flex h-[18px] overflow-hidden rounded-b-[4px] border border-t-0 border-[#555]">
          <div className="flex w-[28px] items-center justify-center border-r border-[#666] bg-gradient-to-b from-[#b8b8b8] to-[#7d7d7d]">
            <div className="mt-[4px] h-[4px] w-[11px] border border-[#444] bg-white" />
          </div>
          <div className="flex w-[27px] items-center justify-center border-r border-[#666] bg-gradient-to-b from-[#b8b8b8] to-[#7d7d7d]">
            <div className="h-[9px] w-[10px] border-2 border-white shadow-[2px_-2px_0_-1px_#fff]" />
          </div>
          <div className="flex w-[46px] items-center justify-center bg-gradient-to-b from-[#d58a80] to-[#c33c2e]">
            <svg width={14} height={12} viewBox="0 0 14 12">
              <path d="M2 1.5 12 10.5M12 1.5 2 10.5" stroke="#fff" strokeWidth="3" />
            </svg>
          </div>
        </div>
      </div>

      {/* menu */}
      <div className="flex h-[21px] shrink-0 items-center bg-[#f0f0f0] pl-[11px] text-[11.6px] text-[#1a1a1a]">
        <span className="w-[40px]">File</span>
        <span className="w-[46px]">View</span>
        <span className="w-[52px]">Insert</span>
        <span className="w-[56px]">Charts</span>
        <span className="w-[51px]">Tools</span>
        <span className="w-[66px]">Window</span>
        <span>Help</span>
      </div>

      <Toolbar />
      <div className="h-[2px] shrink-0 bg-[#6e6e6e]" />

      <div className="flex min-h-0 flex-1">
        <Navigator />
        <div className="relative flex-1 bg-[#ababab]">
          <ChartWindow title="EURUSD,H1" className="left-[1px] top-[2px] h-[365px] w-[714px]">
            <EurChart />
          </ChartWindow>
          <ChartWindow title="GBPUSD,H1" className="left-[715px] top-[2px] h-[365px] w-[706px]">
            <GbpChart />
          </ChartWindow>
          <ChartWindow title="USDCHF,H1" className="left-[1px] top-[370px] h-[367px] w-[714px]">
            <ChfChart />
          </ChartWindow>
          <ChartWindow className="left-[715px] top-[370px] h-[367px] w-[706px]">
            <JpyChart />
          </ChartWindow>

          {/* active floating chart */}
          <div className="absolute left-[128px] top-[129px] z-20 flex h-[563px] w-[1029px] flex-col rounded-t-[4px] border-b-2 border-l border-r-2 border-t border-b-[#58b4c8] border-l-[#8fb0cc] border-r-[#7cc0d8] border-t-[#3c4650] bg-[#b9d1ea]">
            <div className="flex h-[28px] shrink-0 items-center bg-gradient-to-b from-[#9db8d4] to-[#b8d1ec] pl-[8px] pr-[8px] pt-[8px] text-[11.5px] text-[#24364c]">
              <ChartIcon />
              <span className="ml-[3px]">XAUUSD,M15</span>
              <div className="ml-auto flex gap-[3px]">
                <WinBtn kind="min" />
                <WinBtn kind="max" />
                <WinBtn kind="close" hot />
              </div>
            </div>
            <div className="pl-[7px]">
              <div className="w-[1011px] border-l border-t border-[#808080] bg-white pl-[2px] pt-[3px]">
                <XauChart />
              </div>
            </div>
          </div>
        </div>
      </div>

      <ContextMenu />
      <Annotations />
    </div>
  );
}
